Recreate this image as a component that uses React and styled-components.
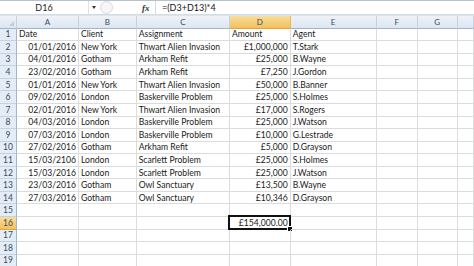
import React from "react";
import styled, { createGlobalStyle } from "styled-components";

const GlobalStyle = createGlobalStyle`
  html, body {
    margin: 0;
    padding: 0;
    width: 474px;
    height: 266px;
    overflow: hidden;
    background: #ffffff;
  }
  body {
    font-family: Lato, "Open Sans", "Liberation Sans", sans-serif;
  }
`;

const COLS = ["17px", "62px", "57.7px", "93.3px", "60.7px", "86px", "41px", "40px", "1fr"];
const ROW_H = 12.57;

const Window = styled.div`
  width: 474px;
  height: 266px;
  display: flex;
  flex-direction: column;
  overflow: hidden;
`;

const RibbonEdge = styled.div`
  height: 3px;
  display: flex;
  background: #e3e7ec;
  border-bottom: 1px solid #b9c2cc;
`;

const RibbonGroup = styled.div`
  width: ${(p) => p.w}px;
  border-right: 1px solid #c9d0d8;
`;

const FormulaRow = styled.div`
  height: 14px;
  display: flex;
  align-items: stretch;
  background: #ffffff;
  border-bottom: 1px solid #d5dbe2;
`;

const NameBox = styled.div`
  width: 88px;
  display: flex;
  align-items: center;
  justify-content: center;
  font-size: 9px;
  color: #222;
  border-right: 1px solid #dde2e8;
`;

const Tools = styled.div`
  width: 63px;
  display: flex;
  align-items: center;
  gap: 4px;
  padding-left: 3px;
  color: #333;
`;

const Arrow = styled.span`
  width: 0;
  height: 0;
  border-left: 2.5px solid transparent;
  border-right: 2.5px solid transparent;
  border-top: 3px solid #333;
`;

const RoundBtn = styled.span`
  width: 11px;
  height: 11px;
  border-radius: 50%;
  border: 1px solid #d6dbe1;
  background: #f4f6f8;
  margin-right: 25px;
`;

const Fx = styled.span`
  font-family: "Liberation Serif", serif;
  font-style: italic;
  font-size: 9px;
  font-weight: bold;
  color: #333;
`;

const Formula = styled.div`
  flex: 1;
  display: flex;
  align-items: center;
  padding-left: 6px;
  font-size: 9px;
  color: #111;
  border-left: 1px solid #d5dbe2;
`;

const Gap = styled.div`
  height: 2px;
  background: #eef1f4;
  border-bottom: 1px solid #dfe4ea;
`;

const Grid = styled.div`
  flex: 1;
  display: grid;
  grid-template-columns: ${COLS.join(" ")};
  grid-auto-rows: ${ROW_H}px;
  align-content: start;
`;

const HeadRowH = styled.div`
  display: contents;
`;

const ColHead = styled.div`
  height: 12.5px;
  display: flex;
  align-items: center;
  justify-content: center;
  font-size: 8px;
  color: #3b4b5e;
  background: ${(p) =>
    p.active
      ? "linear-gradient(#f9dd9c, #f1c15d)"
      : "linear-gradient(#eef2f8, #dde6f1)"};
  border-right: 1px solid ${(p) => (p.active ? "#f2b64d" : "#c5d2e0")};
  border-bottom: 1px solid ${(p) => (p.active ? "#e5a634" : "#9eb6ce")};
  box-sizing: border-box;
`;

const Corner = styled(ColHead)`
  position: relative;
  &::after {
    content: "";
    position: absolute;
    right: 2px;
    bottom: 2px;
    border-left: 5px solid transparent;
    border-bottom: 5px solid #c3cdd9;
  }
`;

const RowHead = styled.div`
  display: flex;
  align-items: center;
  justify-content: center;
  font-size: 8.5px;
  color: #3b4b5e;
  background: ${(p) =>
    p.active ? "linear-gradient(#f9dd9c, #f1c15d)" : "#e4ecf7"};
  border-right: 1px solid #9eb6ce;
  border-bottom: 1px solid ${(p) => (p.active ? "#e5a634" : "#c5d2e0")};
  box-sizing: border-box;
`;

const Cell = styled.div`
  position: relative;
  display: flex;
  align-items: center;
  justify-content: ${(p) => (p.right ? "flex-end" : "flex-start")};
  padding: 0 2px 0 2px;
  font-size: 8.6px;
  color: #1a1a1a;
  white-space: nowrap;
  overflow: visible;
  border-right: 1px solid #dadcdd;
  border-bottom: 1px solid #dadcdd;
  box-sizing: border-box;
`;

const Selection = styled.div`
  position: absolute;
  left: -2px;
  top: -2px;
  right: -1px;
  bottom: -1px;
  border: 2px solid #111;
  pointer-events: none;
  &::after {
    content: "";
    position: absolute;
    right: -4px;
    bottom: -4px;
    width: 4px;
    height: 4px;
    background: #111;
    border: 1px solid #fff;
  }
`;

const rows = [
  ["Date", "Client", "Assignment", "Amount", "Agent"],
  ["01/01/2016", "New York", "Thwart Alien Invasion", "£1,000,000", "T.Stark"],
  ["04/01/2016", "Gotham", "Arkham Refit", "£25,000", "B.Wayne"],
  ["23/02/2016", "Gotham", "Arkham Refit", "£7,250", "J.Gordon"],
  ["01/01/2016", "New York", "Thwart Alien Invasion", "£50,000", "B.Banner"],
  ["09/02/2016", "London", "Baskerville Problem", "£25,000", "S.Holmes"],
  ["02/01/2016", "New York", "Thwart Alien Invasion", "£17,000", "S.Rogers"],
  ["04/03/2016", "London", "Baskerville Problem", "£25,000", "J.Watson"],
  ["07/03/2016", "London", "Baskerville Problem", "£10,000", "G.Lestrade"],
  ["27/02/2016", "Gotham", "Arkham Refit", "£5,000", "D.Grayson"],
  ["15/03/2106", "London", "Scarlett Problem", "£25,000", "S.Holmes"],
  ["15/03/2016", "London", "Scarlett Problem", "£25,000", "J.Watson"],
  ["23/03/2016", "Gotham", "Owl Sanctuary", "£13,500", "B.Wayne"],
  ["27/03/2016", "Gotham", "Owl Sanctuary", "£10,346", "D.Grayson"],
  [],
  ["", "", "", "£154,000.00", ""],
  [],
  [],
  [],
  [],
];

const letters = ["A", "B", "C", "D", "E", "F", "G", ""];

const App = () => {
  return (
    <Window>
      <GlobalStyle />
      <RibbonEdge>
        <RibbonGroup w={95} />
        <RibbonGroup w={199} />
        <RibbonGroup w={94} />
      </RibbonEdge>
      <FormulaRow>
        <NameBox>D16</NameBox>
        <Tools>
          <Arrow />
          <RoundBtn />
          <Fx>fx</Fx>
        </Tools>
        <Formula>=(D3+D13)*4</Formula>
      </FormulaRow>
      <Gap />
      <Grid>
        <HeadRowH>
          <Corner />
          {letters.map((l, i) => (
            <ColHead key={i} active={l === "D"}>
              {l}
            </ColHead>
          ))}
        </HeadRowH>
        {rows.map((r, i) => {
          const n = i + 1;
          return (
            <React.Fragment key={n}>
              <RowHead active={n === 16}>{n}</RowHead>
              {letters.map((l, c) => {
                const v = r[c] || "";
                const right = n > 1 && (c === 0 || c === 3);
                return (
                  <Cell key={c} right={right}>
                    {v}
                    {n === 16 && c === 3 && <Selection />}
                  </Cell>
                );
              })}
            </React.Fragment>
          );
        })}
      </Grid>
    </Window>
  );
};

export default App;
